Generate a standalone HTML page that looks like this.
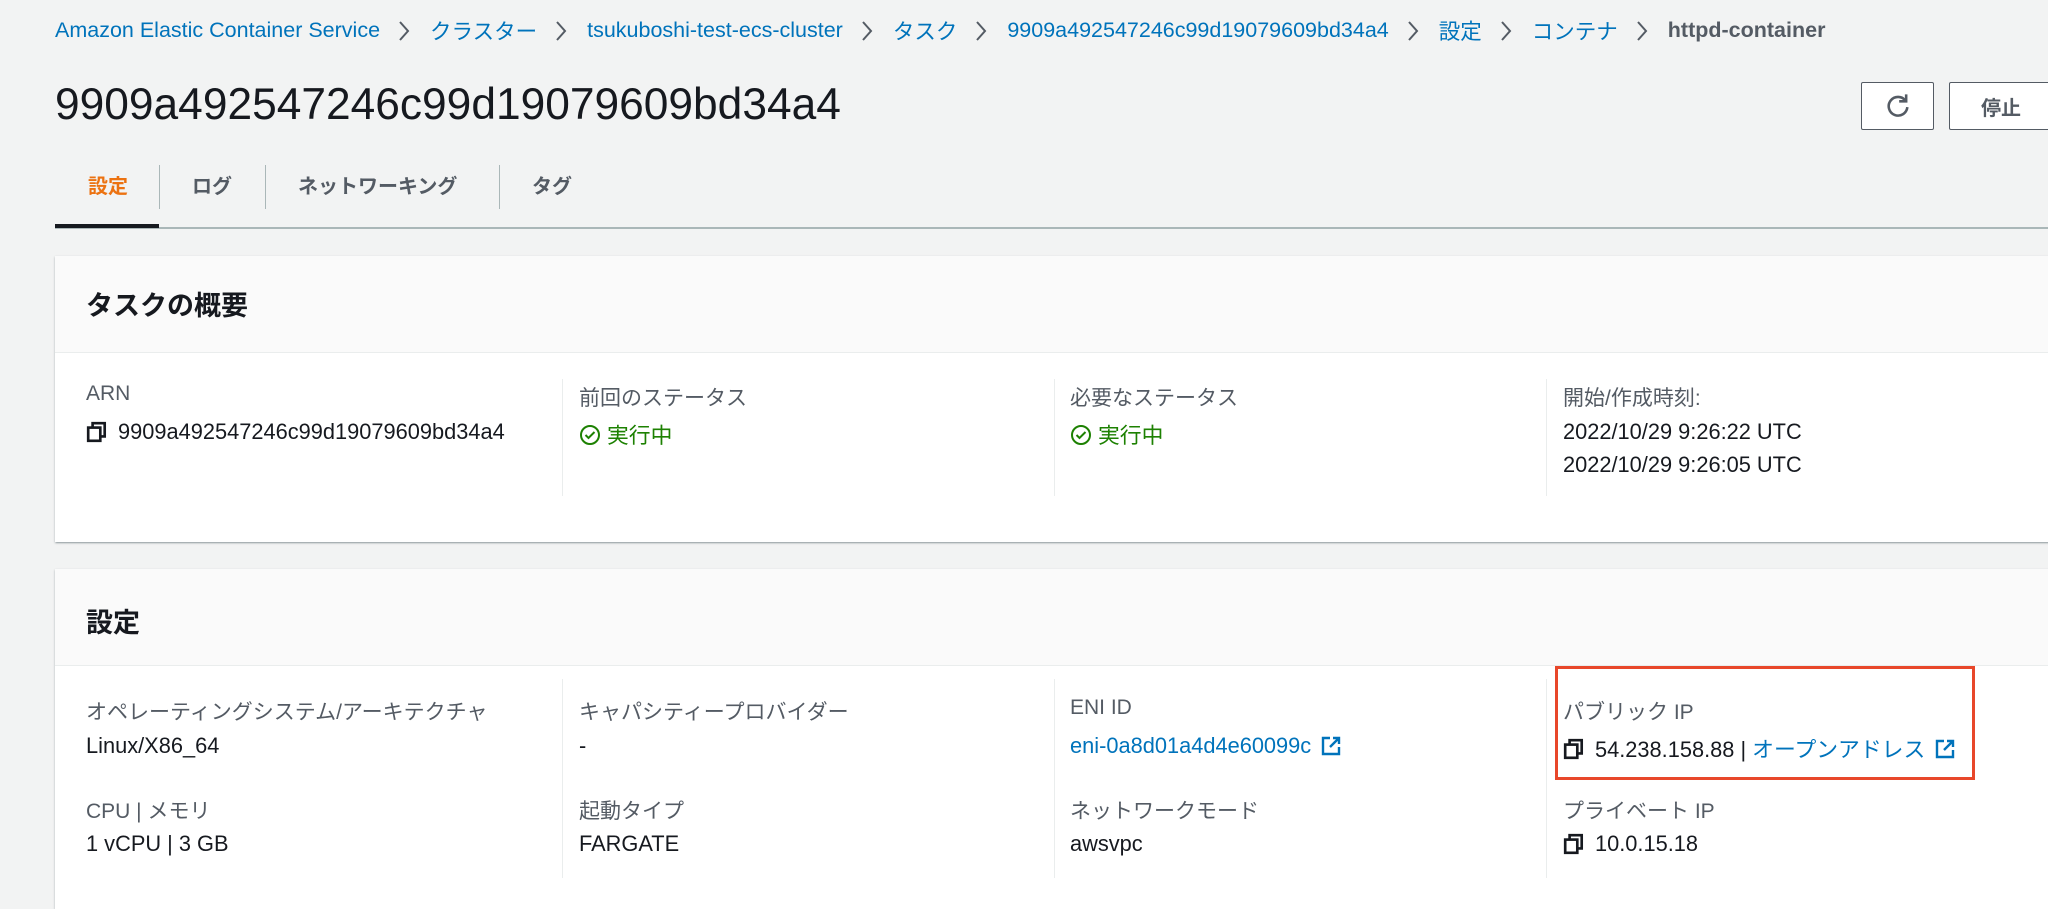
<!DOCTYPE html>
<html><head><meta charset="utf-8"><style>
body{margin:0;width:2048px;height:878px;overflow:hidden;background:#f2f3f3;font-family:"Liberation Sans","Noto Sans CJK JP",sans-serif;color:#16191f;position:relative}
.a{position:absolute;white-space:nowrap}
.bc{top:15px;left:55px;font-size:21.5px;color:#0073bb;display:flex;align-items:center}
.bc .c{margin:0 20px 0 18px;display:inline-block;width:12px;height:22px}
.bc b{color:#545b64}
h1{position:absolute;left:55px;top:80px;margin:0;font-size:44.3px;font-weight:400;color:#16191f}
.btn{position:absolute;top:82px;height:48px;border:1px solid #545b64;background:#fff;border-radius:2px;box-sizing:border-box;display:flex;align-items:center;justify-content:center;font-size:20px;font-weight:700;color:#545b64}
.tab{position:absolute;top:170px;font-size:20px;font-weight:700;color:#545b64}
.sep{position:absolute;top:165px;width:1px;height:44px;background:#aab7b8}
.panel{position:absolute;left:55px;width:2060px;background:#fff;box-shadow:0 1px 2px rgba(0,28,36,.3),1px 1px 1px rgba(0,28,36,.15)}
.ph{height:97px;background:#fafafa;border-bottom:1px solid #eaeded;box-sizing:border-box;font-size:27px;font-weight:700;padding:28px 0 0 31px}
.col{position:absolute;width:1px;background:#eaeded}
.lb{font-size:21px;color:#545b64}
.v{font-size:21.8px;color:#16191f;display:flex;align-items:center;gap:10px}
.lnk{color:#0073bb}
.ok{color:#1d8102}
</style></head><body>
<div class="a bc"><span>Amazon Elastic Container Service</span><svg class="c" viewBox="0 0 12 22" fill="none" stroke="#545b64" stroke-width="2"><path d="M2 2l8 9-8 9"/></svg><span>クラスター</span><svg class="c" viewBox="0 0 12 22" fill="none" stroke="#545b64" stroke-width="2"><path d="M2 2l8 9-8 9"/></svg><span>tsukuboshi-test-ecs-cluster</span><svg class="c" viewBox="0 0 12 22" fill="none" stroke="#545b64" stroke-width="2"><path d="M2 2l8 9-8 9"/></svg><span>タスク</span><svg class="c" viewBox="0 0 12 22" fill="none" stroke="#545b64" stroke-width="2"><path d="M2 2l8 9-8 9"/></svg><span>9909a492547246c99d19079609bd34a4</span><svg class="c" viewBox="0 0 12 22" fill="none" stroke="#545b64" stroke-width="2"><path d="M2 2l8 9-8 9"/></svg><span>設定</span><svg class="c" viewBox="0 0 12 22" fill="none" stroke="#545b64" stroke-width="2"><path d="M2 2l8 9-8 9"/></svg><span>コンテナ</span><svg class="c" viewBox="0 0 12 22" fill="none" stroke="#545b64" stroke-width="2"><path d="M2 2l8 9-8 9"/></svg><b>httpd-container</b></div>
<h1>9909a492547246c99d19079609bd34a4</h1>
<div class="btn" style="left:1861px;width:73px"><svg width="28" height="28" viewBox="0 0 24 24" fill="none" stroke="#545b64" stroke-width="2.2"><path d="M18.5 7.5A8 8 0 1 0 20 13"/><path d="M19 2v6h-6"/></svg></div>
<div class="btn" style="left:1949px;width:120px;justify-content:flex-start;padding-left:31px">停止</div>
<div class="tab" style="left:88px;color:#ec7211">設定</div>
<div class="tab" style="left:192px">ログ</div>
<div class="tab" style="left:298px">ネットワーキング</div>
<div class="tab" style="left:532px">タグ</div>
<div class="sep" style="left:159px"></div><div class="sep" style="left:265px"></div><div class="sep" style="left:499px"></div>
<div class="a" style="left:55px;top:227px;width:1993px;height:2px;background:#aab7b8"></div>
<div class="a" style="left:55px;top:224px;width:104px;height:4px;background:#16191f"></div>

<div class="panel" style="top:256px;height:286px"><div class="ph">タスクの概要</div></div>
<div class="col" style="left:562px;top:379px;height:117px"></div>
<div class="col" style="left:1054px;top:379px;height:117px"></div>
<div class="col" style="left:1546px;top:379px;height:117px"></div>
<div class="a lb" style="left:86px;top:382px">ARN</div>
<div class="a v" style="left:86px;top:419px"><svg width="22" height="22" viewBox="0 0 20 20" fill="none" stroke="#16191f" stroke-width="2.4"><rect x="2" y="6" width="11" height="12"/><path d="M6 6V2h11v12h-4"/></svg>9909a492547246c99d19079609bd34a4</div>
<div class="a lb" style="left:579px;top:382px">前回のステータス</div>
<div class="a v ok" style="left:579px;top:419px;gap:6px"><svg width="22" height="22" viewBox="0 0 22 22" fill="none" stroke="#1d8102" stroke-width="2"><circle cx="11" cy="11" r="9"/><path d="M6.5 11l3 3 6-6"/></svg>実行中</div>
<div class="a lb" style="left:1070px;top:382px">必要なステータス</div>
<div class="a v ok" style="left:1070px;top:419px;gap:6px"><svg width="22" height="22" viewBox="0 0 22 22" fill="none" stroke="#1d8102" stroke-width="2"><circle cx="11" cy="11" r="9"/><path d="M6.5 11l3 3 6-6"/></svg>実行中</div>
<div class="a lb" style="left:1563px;top:382px">開始/作成時刻:</div>
<div class="a v" style="left:1563px;top:419px">2022/10/29 9:26:22 UTC</div>
<div class="a v" style="left:1563px;top:452px">2022/10/29 9:26:05 UTC</div>

<div class="panel" style="top:569px;height:340px"><div class="ph" style="padding-top:32px">設定</div></div>
<div class="col" style="left:562px;top:679px;height:199px"></div>
<div class="col" style="left:1054px;top:679px;height:199px"></div>
<div class="col" style="left:1546px;top:679px;height:199px"></div>
<div class="a lb" style="left:86px;top:696px">オペレーティングシステム/アーキテクチャ</div>
<div class="a v" style="left:86px;top:733px">Linux/X86_64</div>
<div class="a lb" style="left:86px;top:795px">CPU | メモリ</div>
<div class="a v" style="left:86px;top:831px">1 vCPU | 3 GB</div>
<div class="a lb" style="left:579px;top:696px">キャパシティープロバイダー</div>
<div class="a v" style="left:579px;top:733px">-</div>
<div class="a lb" style="left:579px;top:795px">起動タイプ</div>
<div class="a v" style="left:579px;top:831px">FARGATE</div>
<div class="a lb" style="left:1070px;top:696px">ENI ID</div>
<div class="a v lnk" style="left:1070px;top:733px">eni-0a8d01a4d4e60099c<svg width="20" height="20" viewBox="0 0 20 20" fill="none" stroke="#0073bb" stroke-width="2.4"><path d="M9 2H2v16h16v-7"/><path d="M12 2h6v6M18 2l-9 9"/></svg></div>
<div class="a lb" style="left:1070px;top:795px">ネットワークモード</div>
<div class="a v" style="left:1070px;top:831px">awsvpc</div>
<div class="a lb" style="left:1563px;top:696px">パブリック IP</div>
<div class="a v" style="left:1563px;top:733px"><svg width="22" height="22" viewBox="0 0 20 20" fill="none" stroke="#16191f" stroke-width="2.4"><rect x="2" y="6" width="11" height="12"/><path d="M6 6V2h11v12h-4"/></svg><span>54.238.158.88 | <span class="lnk">オープンアドレス</span></span><svg width="20" height="20" viewBox="0 0 20 20" fill="none" stroke="#0073bb" stroke-width="2.4"><path d="M9 2H2v16h16v-7"/><path d="M12 2h6v6M18 2l-9 9"/></svg></div>
<div class="a lb" style="left:1563px;top:795px">プライベート IP</div>
<div class="a v" style="left:1563px;top:831px"><svg width="22" height="22" viewBox="0 0 20 20" fill="none" stroke="#16191f" stroke-width="2.4"><rect x="2" y="6" width="11" height="12"/><path d="M6 6V2h11v12h-4"/></svg>10.0.15.18</div>
<div class="a" style="left:1555px;top:666px;width:420px;height:114px;border:3px solid #e8472a;box-sizing:border-box"></div>
</body></html>
